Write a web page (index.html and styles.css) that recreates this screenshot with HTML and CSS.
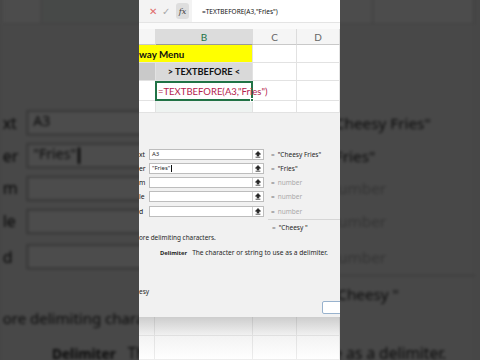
FILE: index.html
```html
<!DOCTYPE html>
<html lang="en">
<head>
  <meta charset="UTF-8" />
  <meta name="viewport" content="width=device-width, initial-scale=1.0" />
  <title>TEXTBEFORE</title>
  <link rel="stylesheet" href="styles.css">
</head>
<body>

<div class="scene">
  <!-- blurred, enlarged copy of the sheet behind it -->
  <div class="backdrop" id="backdrop" aria-hidden="true"></div>

  <div class="sheet" id="sheet">
    <div class="formula-bar">
      <div class="fb-tools">
        <span class="fb-cancel">✕</span>
        <span class="fb-ok">✓</span>
        <span class="fb-fx">fx</span>
      </div>
      <div class="fb-input">=TEXTBEFORE(A3,"Fries")</div>
    </div>
    <div class="fb-gap"></div>

    <div class="grid">
      <div class="hd">&nbsp;</div>
      <div class="hd hd-active">B</div>
      <div class="hd">C</div>
      <div class="hd">D</div>

      <div class="cell title">way Menu</div>
      <div class="cell"></div>
      <div class="cell"></div>

      <div class="cell shade-a"></div>
      <div class="cell shade-b">&gt; TEXTBEFORE &lt;</div>
      <div class="cell"></div>
      <div class="cell"></div>

      <div class="cell"></div>
      <div class="cell selected">=TEXTBEFORE(A3,"Fries")<span class="handle"></span></div>
      <div class="cell"></div>
      <div class="cell"></div>

      <div class="cell"></div>
      <div class="cell band"></div>
      <div class="cell"></div>
      <div class="cell"></div>
    </div>

    <div class="dialog">
      <div class="args">
        <div class="arg">
          <span class="arg-label">xt</span>
          <span class="field">A3<span class="ref-btn"><svg width="6" height="7" viewBox="0 0 6 7"><path d="M3 0.5 L5.5 3.2 H3.8 V5 H2.2 V3.2 H0.5 Z M0.6 6.2 H5.4" fill="#222" stroke="#222" stroke-width="0.8"/></svg></span></span>
          <span class="arg-value"><i>=</i>"Cheesy Fries"</span>
        </div>
        <div class="arg">
          <span class="arg-label">er</span>
          <span class="field">"Fries"<b class="caret"></b><span class="ref-btn"><svg width="6" height="7" viewBox="0 0 6 7"><path d="M3 0.5 L5.5 3.2 H3.8 V5 H2.2 V3.2 H0.5 Z M0.6 6.2 H5.4" fill="#222" stroke="#222" stroke-width="0.8"/></svg></span></span>
          <span class="arg-value"><i>=</i>"Fries"</span>
        </div>
        <div class="arg">
          <span class="arg-label">m</span>
          <span class="field"><span class="ref-btn"><svg width="6" height="7" viewBox="0 0 6 7"><path d="M3 0.5 L5.5 3.2 H3.8 V5 H2.2 V3.2 H0.5 Z M0.6 6.2 H5.4" fill="#222" stroke="#222" stroke-width="0.8"/></svg></span></span>
          <span class="arg-value muted"><i>=</i>number</span>
        </div>
        <div class="arg">
          <span class="arg-label">le</span>
          <span class="field"><span class="ref-btn"><svg width="6" height="7" viewBox="0 0 6 7"><path d="M3 0.5 L5.5 3.2 H3.8 V5 H2.2 V3.2 H0.5 Z M0.6 6.2 H5.4" fill="#222" stroke="#222" stroke-width="0.8"/></svg></span></span>
          <span class="arg-value muted"><i>=</i>number</span>
        </div>
        <div class="arg">
          <span class="arg-label">d</span>
          <span class="field"><span class="ref-btn"><svg width="6" height="7" viewBox="0 0 6 7"><path d="M3 0.5 L5.5 3.2 H3.8 V5 H2.2 V3.2 H0.5 Z M0.6 6.2 H5.4" fill="#222" stroke="#222" stroke-width="0.8"/></svg></span></span>
          <span class="arg-value muted"><i>=</i>number</span>
        </div>
      </div>

      <div class="result"><i>=</i>"Cheesy "</div>
      <p class="desc">ore delimiting characters.</p>
      <p class="desc-arg"><b>Delimiter</b>The character or string to use as a delimiter.</p>
      <p class="formula-result">esy</p>
      <div class="buttons"><span class="btn"></span></div>
    </div>

    <div class="below">
      <div class="cell"></div><div class="cell"></div><div class="cell"></div><div class="cell"></div>
      <div class="cell"></div><div class="cell"></div><div class="cell"></div><div class="cell"></div>
    </div>
  </div>
</div>

<script>
document.getElementById('backdrop').appendChild(document.getElementById('sheet').cloneNode(true));
document.querySelector('#backdrop .sheet').removeAttribute('id');
</script>

</body>
</html>
```

FILE: styles.css
```css
* {
  box-sizing: border-box;
}

body {
  margin: 0;
  width: 480px;
  height: 360px;
  overflow: hidden;
  background: #474747;
  font-family: "Noto Sans", "Liberation Sans", sans-serif;
  color: #1f1f1f;
}

.scene {
  position: relative;
  width: 480px;
  height: 360px;
  padding-left: 139px;
  overflow: hidden;
}

/* enlarged copy */
.backdrop {
  position: absolute;
  left: 139px;
  top: 0;
  width: 201px;
  height: 360px;
  transform-origin: 101px 178px;
  transform: scale(2.35);
  filter: brightness(0.3) blur(0.6px);
}

.sheet {
  position: relative;
  width: 201px;
  height: 360px;
  background: #fff;
  display: flex;
  flex-direction: column;
  overflow: hidden;
}

/* formula bar */
.formula-bar {
  height: 22px;
  display: flex;
  background: #f3f3f3;
}

.fb-tools {
  width: 53px;
  display: flex;
  align-items: center;
  padding-left: 10px;
}

.fb-cancel {
  color: #e06a6a;
  font-size: 10px;
  font-weight: 300;
  width: 13px;
}

.fb-ok {
  color: #a9a9a9;
  font-size: 10px;
  width: 14px;
}

.fb-fx {
  width: 13px;
  height: 16px;
  border-radius: 3px;
  background: #dedede;
  font-family: "DejaVu Serif", serif;
  font-style: italic;
  font-size: 8px;
  color: #444;
  display: flex;
  align-items: center;
  justify-content: center;
}

.fb-input {
  flex: 1;
  background: #fff;
  padding-left: 10px;
  display: flex;
  align-items: center;
  font-size: 6.5px;
  color: #111;
}

.fb-gap {
  height: 7px;
  background: #fafafa;
  border-top: 1px solid #e4e4e4;
}

/* cells */
.grid {
  display: grid;
  grid-template-columns: 17px 97px 44px 43px;
  grid-template-rows: 16px 18px 18px 20px 12px;
  font-family: Lato, "Liberation Sans", sans-serif;
}

.hd {
  background: #f5f5f5;
  border-right: 1px solid #dcdcdc;
  border-bottom: 1px solid #c9c9c9;
  display: flex;
  align-items: center;
  justify-content: center;
  font-size: 10px;
  color: #666;
}

.hd-active {
  background: #dcdcdc;
  color: #217346;
  border-bottom: 1px solid #9a9a9a;
}

.cell {
  border-right: 1px solid #e2e2e2;
  border-bottom: 1px solid #e2e2e2;
  display: flex;
  align-items: center;
  white-space: nowrap;
}

.title {
  grid-column: span 2;
  background: #ffff00;
  font-weight: bold;
  font-size: 9.8px;
  color: #111;
}

.shade-a {
  background: #c9c9c9;
}

.shade-b {
  background: #d9d9d9;
  justify-content: center;
  font-weight: bold;
  font-size: 9.2px;
  color: #111;
}

.selected {
  position: relative;
  border: 2px solid #217346;
  margin-left: -1px;
  padding-left: 1px;
  font-size: 9.5px;
  color: #b3214d;
  overflow: visible;
  z-index: 1;
}

.handle {
  position: absolute;
  right: -3px;
  bottom: -3px;
  width: 4px;
  height: 4px;
  background: #217346;
  border: 1px solid #fff;
}

.band {
  background: #eef3f1;
}

/* function arguments dialog */
.dialog {
  height: 204px;
  background: #f1f1f1;
  padding-top: 34px;
  display: flex;
  flex-direction: column;
  font-size: 6.5px;
}

.arg {
  height: 14.25px;
  display: flex;
  align-items: center;
}

.arg-label {
  width: 10px;
  font-size: 6.8px;
  color: #111;
}

.field {
  position: relative;
  width: 115px;
  height: 11px;
  background: #fff;
  border: 1px solid #bdbdbd;
  display: flex;
  align-items: center;
  padding-left: 2px;
  font-size: 6px;
}

.caret {
  width: 0.6px;
  height: 7px;
  background: #111;
  margin-left: 0.5px;
}

.ref-btn {
  position: absolute;
  right: 0;
  top: 0;
  width: 11px;
  height: 9px;
  border-left: 1px solid #d0d0d0;
  display: flex;
  align-items: center;
  justify-content: center;
}

.arg-value {
  padding-left: 7px;
  font-size: 6.5px;
}

.arg-value i,
.result i {
  font-style: normal;
  color: #777;
  margin-right: 3px;
}

.muted {
  color: #aaa;
}

.result {
  margin-left: 129px;
  margin-top: 1px;
  border-top: 1px solid #d6d6d6;
  padding: 3px 0 0 4px;
  font-size: 6.5px;
  height: 14px;
}

.desc {
  margin: 0;
  height: 10px;
  font-size: 6.4px;
}

.desc-arg {
  margin: 5px 0 0 21px;
  font-size: 6.6px;
}

.desc-arg b {
  font-size: 5.8px;
  margin-right: 5px;
}

.formula-result {
  margin: 30px 0 0;
}

.buttons {
  display: flex;
  justify-content: flex-end;
  margin-top: 5px;
  margin-right: -2px;
}

.btn {
  width: 20px;
  height: 13px;
  background: #fff;
  border: 1px solid #98b2cd;
  border-radius: 2px;
}

/* cells below the dialog */
.below {
  flex: 1;
  display: grid;
  grid-template-columns: 16px 98px 44px 43px;
  grid-template-rows: 19px 1fr;
  background: linear-gradient(#cdcdcd, #f3f3f3 45%, #fff);
}

.below .cell {
  border-color: rgba(0, 0, 0, 0.07);
}
```
